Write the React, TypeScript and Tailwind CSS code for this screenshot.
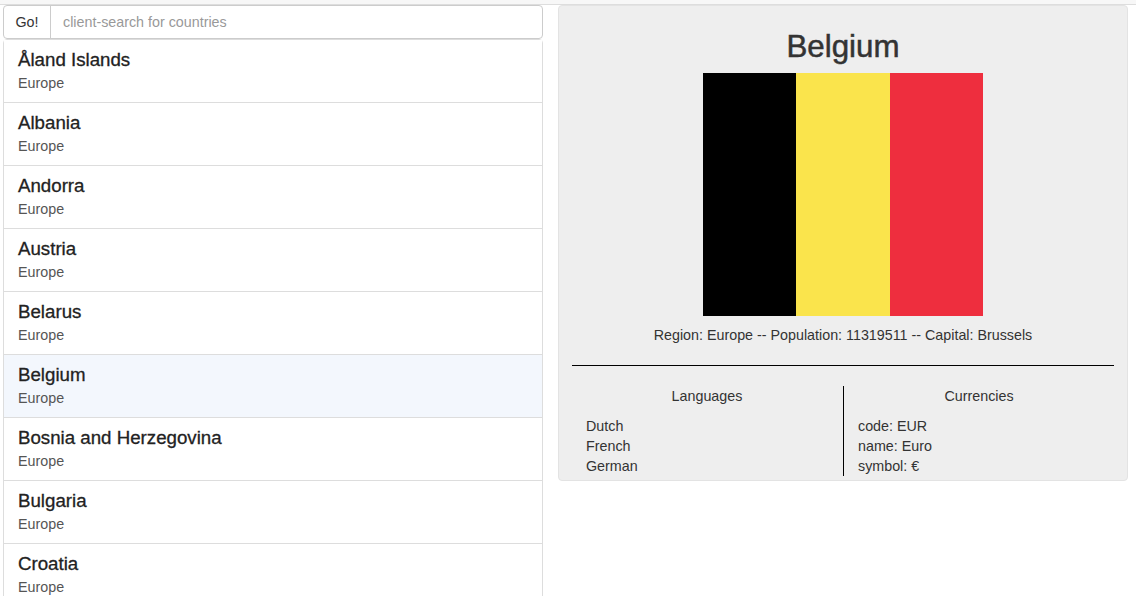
const countries = [
  "Åland Islands",
  "Albania",
  "Andorra",
  "Austria",
  "Belarus",
  "Belgium",
  "Bosnia and Herzegovina",
  "Bulgaria",
  "Croatia",
];

export default function App() {
  return (
    <div className="h-[596px] overflow-hidden bg-white font-['Liberation_Sans',Arial,sans-serif] text-[14.3px] leading-[20px] text-[#333]">
      <div className="h-[5px] border-b border-[#ddd] bg-[#f7f7f7]" />
      <div className="flex items-start pl-[3px]">
        <div className="w-[540px] shrink-0">
          <div className="flex h-[34px] rounded-[4px] border border-[#ccc] bg-white">
            <button className="w-[47px] shrink-0 border-r border-[#ccc] text-[14.3px] text-[#333]">Go!</button>
            <div className="pl-3 pt-[6px] text-[#999]">client-search for countries</div>
          </div>
          <ul className="rounded-t-[4px] border border-[#ddd]">
            {countries.map((name) => (
              <li
                key={name}
                className={`h-[63px] border-b border-[#ddd] px-[14px] pt-[9px] ${name === "Belgium" ? "bg-[#f3f7fd]" : "bg-white"}`}
              >
                <h4 className="text-[18.7px] leading-[21px] font-normal text-[#222] [-webkit-text-stroke:0.3px_#222]">{name}</h4>
                <p className="mt-[3px] text-[#555]">Europe</p>
              </li>
            ))}
          </ul>
        </div>
        <div className="ml-[15px] h-[476px] w-[570px] shrink-0 rounded-[4px] border border-[#e3e3e3] bg-[#eee] px-[13px]">
          <h2 className="mt-[23px] text-center text-[31.3px] leading-[36px] font-normal text-[#333] [-webkit-text-stroke:0.5px_#333]">Belgium</h2>
          <div className="mx-auto mt-[8px] flex h-[243px] w-[280px]">
            <div className="flex-1 bg-black" />
            <div className="flex-1 bg-[#fae44c]" />
            <div className="flex-1 bg-[#ee2e3e]" />
          </div>
          <p className="mt-[9px] text-center">Region: Europe -- Population: 11319511 -- Capital: Brussels</p>
          <hr className="mt-[20px] border-t border-black" />
          <div className="mt-[20px] flex h-[90px]">
            <div className="w-[272px] border-r border-black">
              <div className="pr-[1px] text-center">Languages</div>
              <ul className="mt-[10px] pl-[14px]">
                <li>Dutch</li>
                <li>French</li>
                <li>German</li>
              </ul>
            </div>
            <div className="flex-1">
              <div className="text-center">Currencies</div>
              <ul className="mt-[10px] pl-[14px]">
                <li>code: EUR</li>
                <li>name: Euro</li>
                <li>symbol: €</li>
              </ul>
            </div>
          </div>
        </div>
      </div>
    </div>
  );
}
